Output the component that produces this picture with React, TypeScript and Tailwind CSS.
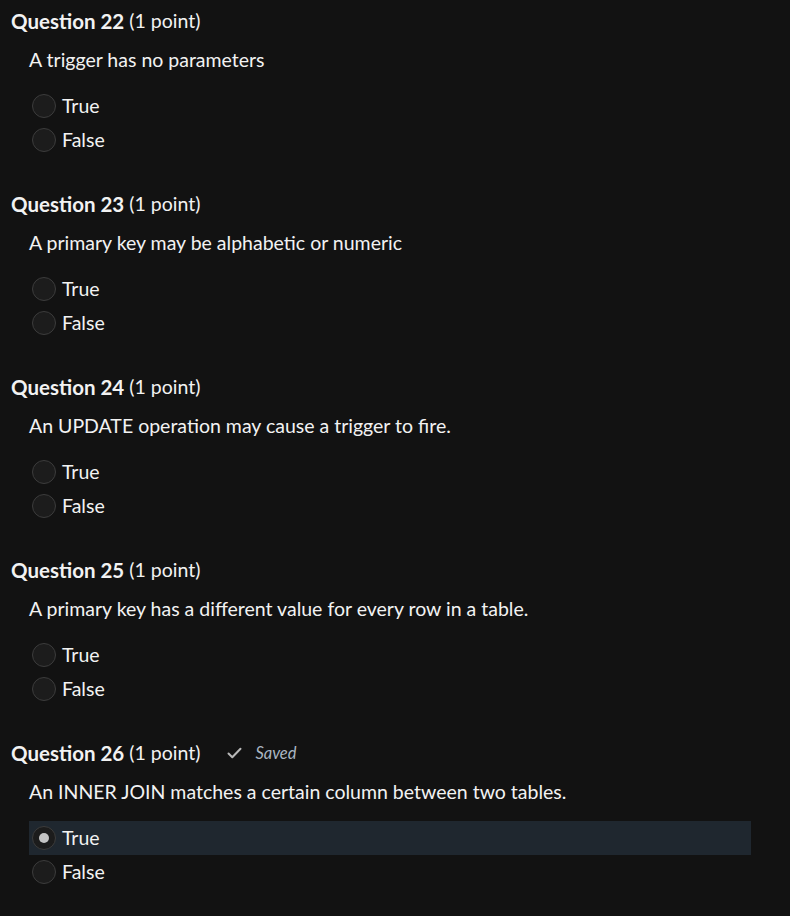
import React from "react";

type Q = { n: number; text: string; answer?: "True" | "False"; saved?: boolean };

const QUESTIONS: Q[] = [
  { n: 22, text: "A trigger has no parameters" },
  { n: 23, text: "A primary key may be alphabetic or numeric" },
  { n: 24, text: "An UPDATE operation may cause a trigger to fire." },
  { n: 25, text: "A primary key has a different value for every row in a table." },
  { n: 26, text: "An INNER JOIN matches a certain column between two tables.", answer: "True", saved: true },
];

function Radio({ checked }: { checked: boolean }) {
  return (
    <span className="flex h-[24px] w-[24px] shrink-0 items-center justify-center rounded-full border border-[#3c3c3c] bg-[#1c1c1c]">
      {checked && <span className="h-[10px] w-[10px] rounded-full bg-[#c4c4c4]" />}
    </span>
  );
}

function Question({ q }: { q: Q }) {
  return (
    <div className="pb-[33px]">
      <div className="flex h-[28px] items-center pl-[11px]">
        <span className="text-[20.5px] font-bold text-[#f2f2f2]">Question {q.n}</span>
        <span className="ml-[5px] text-[19.5px] text-[#f2f2f2]">(1 point)</span>
        {q.saved && (
          <span className="ml-[27px] flex items-center gap-[13px]">
            <svg width="15" height="12" viewBox="0 0 15 12" fill="none" aria-hidden>
              <path d="M1.5 6.5l3.8 3.8 8.2-8.6" stroke="#b8b8b8" strokeWidth="2" strokeLinecap="round" strokeLinejoin="round" />
            </svg>
            <span className="text-[16.5px] italic text-[#aab6c2]">Saved</span>
          </span>
        )}
      </div>
      <p className="mt-[12px] h-[26px] pl-[29px] text-[19.5px] leading-[26px] text-[#f2f2f2]">{q.text}</p>
      <div className="mt-[16px] flex flex-col pl-[29px] pr-[39px]">
        {(["True", "False"] as const).map((opt) => {
          const checked = q.answer === opt;
          return (
            <div
              key={opt}
              className={`flex h-[34px] items-center gap-[6px] pl-[3px] ${checked ? "bg-[#1f272f]" : ""}`}
            >
              <Radio checked={checked} />
              <span className="text-[19.5px] text-[#f2f2f2]">{opt}</span>
            </div>
          );
        })}
      </div>
    </div>
  );
}

export default function App() {
  return (
    <div className="min-h-[916px] w-[790px] bg-[#121212] pt-[7px] font-['Lato',sans-serif]">
      {QUESTIONS.map((q) => (
        <Question key={q.n} q={q} />
      ))}
    </div>
  );
}
